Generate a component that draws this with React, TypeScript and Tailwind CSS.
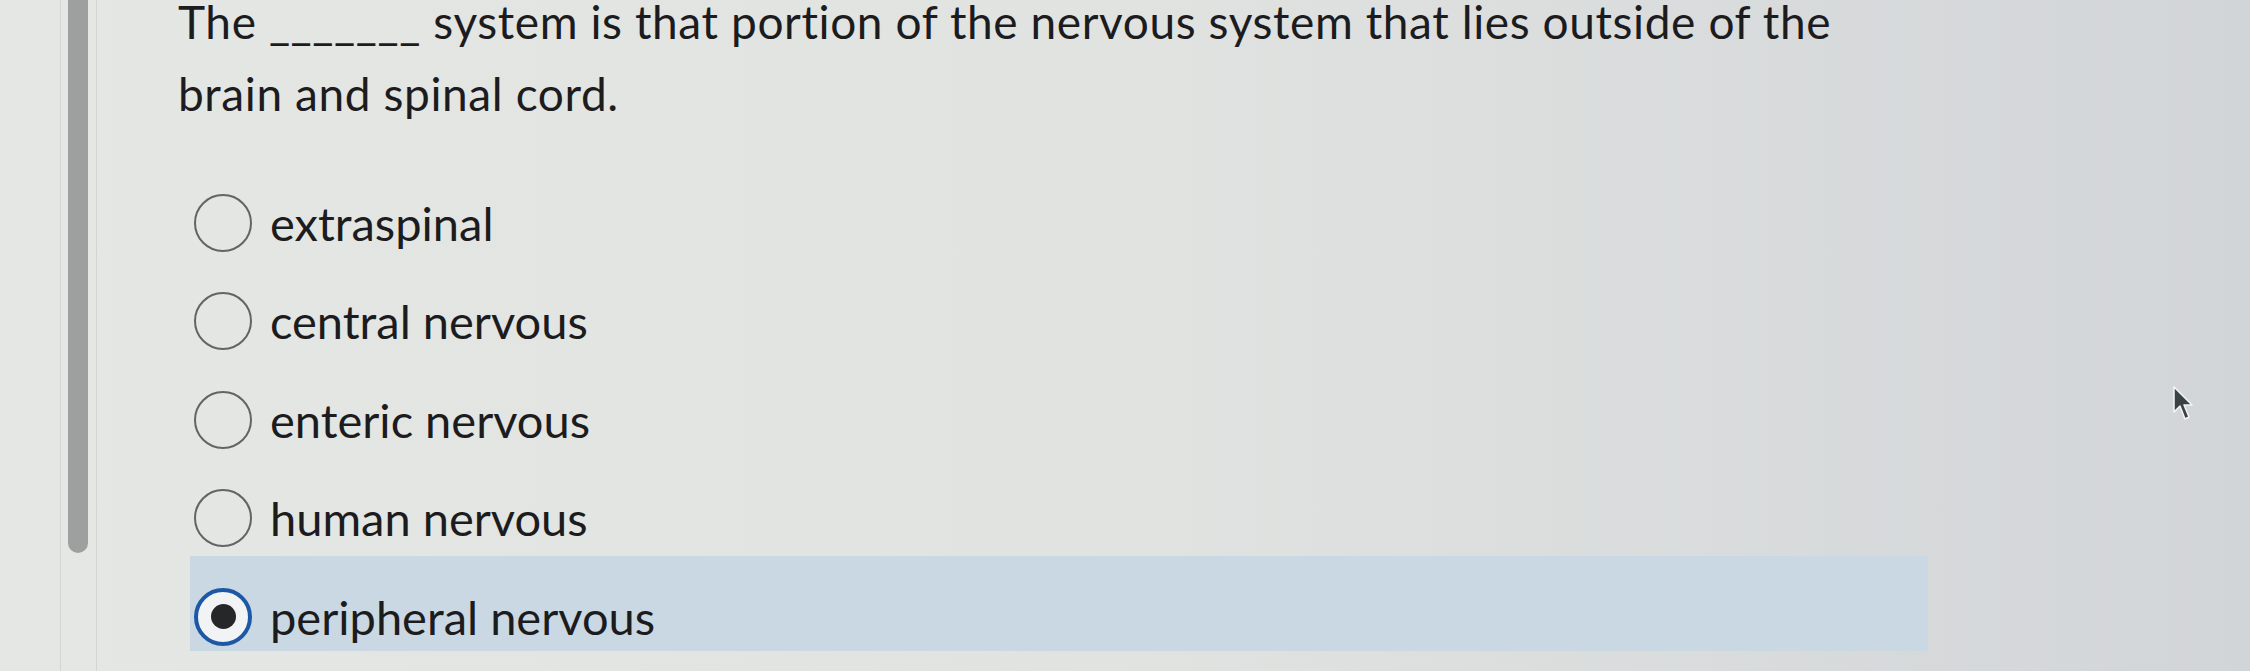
import React from 'react';

const options = [
  { label: 'extraspinal', selected: false },
  { label: 'central nervous', selected: false },
  { label: 'enteric nervous', selected: false },
  { label: 'human nervous', selected: false },
  { label: 'peripheral nervous', selected: true },
];

const Radio: React.FC<{ checked: boolean }> = ({ checked }) =>
  checked ? (
    <span className="flex h-[58px] w-[58px] shrink-0 items-center justify-center rounded-full border-[4px] border-[#1d58a6] bg-[#f1f3f4]">
      <span className="h-[25px] w-[25px] rounded-full bg-[#262728]" />
    </span>
  ) : (
    <span className="h-[58px] w-[58px] shrink-0 rounded-full border-[2.5px] border-[#626466]" />
  );

const App: React.FC = () => {
  return (
    <div className="relative flex h-[671px] w-[2250px] overflow-hidden bg-gradient-to-r from-[#e5e7e4] via-[#e1e3e1] to-[#d2d5d8] font-[Lato,sans-serif] text-[#1c1c1e]">
      {/* Left gutter with scrollbar */}
      <div className="flex w-[178px] shrink-0 pl-[60px]">
        <div className="h-full w-[37px] border-x border-[#d3d5d3]">
          <div className="ml-[7px] h-[553px] w-[20px] rounded-b-full bg-[#9ea0a0]" />
        </div>
      </div>

      {/* Question */}
      <div className="flex flex-1 flex-col">
        <p className="-mt-[14px] w-[1720px] text-[46px] leading-[72px] tracking-[0.6px]">
          The _______ system is that portion of the nervous system that lies outside of the brain and spinal cord.
        </p>

        <div className="ml-[12px] mt-[32px] flex w-[1738px] flex-col gap-[3.5px]">
          {options.map((o) => (
            <div
              key={o.label}
              className={`flex h-[95px] items-center gap-[18px] pb-[4px] pl-[4px] pt-[30px] ${
                o.selected ? 'bg-[#c9d8e3]' : ''
              }`}
            >
              <Radio checked={o.selected} />
              <span className="text-[47px] leading-[58px]">{o.label}</span>
            </div>
          ))}
        </div>
      </div>

      {/* Mouse pointer */}
      <svg
        className="absolute left-[2172px] top-[386px]"
        width="22"
        height="36"
        viewBox="0 0 22 36"
      >
        <path
          d="M2 1 L2 26 L8 20 L13 33 L17 31 L12 19 L20 19 Z"
          fill="#3a4246"
          stroke="#f4f5f5"
          strokeWidth="1.5"
          strokeLinejoin="round"
        />
      </svg>
    </div>
  );
};

export default App;
